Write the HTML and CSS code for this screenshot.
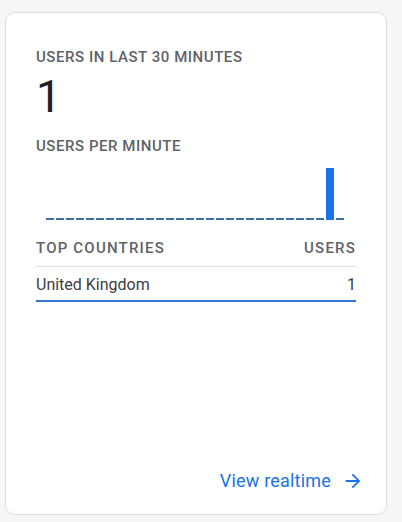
FILE: index.html
```html
<!DOCTYPE html>
<html>
<head>
<meta charset="utf-8">
<link rel="stylesheet" href="styles.css">
</head>
<body>
<div class="card">
  <div class="label first">USERS IN LAST 30 MINUTES</div>
  <div class="big">1</div>
  <div class="label">USERS PER MINUTE</div>
  <div class="chart" id="chart"></div>
  <div class="thead">
    <span>TOP COUNTRIES</span><span>USERS</span>
  </div>
  <div class="row">
    <span>United Kingdom</span><span>1</span>
  </div>
  <div class="footer">
    <a class="link">View realtime
      <svg width="22" height="22" viewBox="0 0 24 24"><path d="M12 4l-1.41 1.41L16.17 11H4v2h12.17l-5.58 5.59L12 20l8-8z" fill="#1a73e8"/></svg>
    </a>
  </div>
</div>
<script>
  var c = document.getElementById('chart');
  for (var i = 0; i < 30; i++) {
    var b = document.createElement('div');
    b.className = i === 28 ? 'bar on' : 'bar';
    c.appendChild(b);
  }
</script>
</body>
</html>
```
FILE: styles.css
```css
html, body { margin: 0; padding: 0; }
body {
  background: #f6f6f6;
  font-family: Roboto, "Liberation Sans", Arial, sans-serif;
  width: 402px;
  height: 522px;
  overflow: hidden;
}
.card {
  box-sizing: border-box;
  margin: 12px 0 0 5px;
  width: 382px;
  height: 503px;
  background: #fff;
  border: 1px solid #dadce0;
  border-radius: 10px;
  padding: 0 30px 0 30px;
  display: flex;
  flex-direction: column;
}
.label {
  font-size: 15px;
  font-weight: 500;
  letter-spacing: 0.55px;
  line-height: 18px;
  color: #5f6368;
}
.label.first { margin-top: 35px; }
.big {
  font-size: 45px;
  line-height: 48px;
  color: #202124;
  margin-top: 7px;
  margin-bottom: 16px;
}
.chart {
  margin: 13px 0 0 10px;
  height: 52px;
  display: flex;
  align-items: flex-end;
}
.bar {
  width: 8px;
  margin-right: 2px;
  height: 2px;
  background: #3c6fa3;
}
.bar.on {
  height: 52px;
  background: #1a73e8;
}
.thead {
  margin-top: 19px;
  display: flex;
  justify-content: space-between;
  font-size: 15px;
  font-weight: 500;
  letter-spacing: 1.2px;
  line-height: 18px;
  color: #5f6368;
  padding-bottom: 9px;
  border-bottom: 1px solid #dadce0;
}
.row {
  display: flex;
  justify-content: space-between;
  font-size: 16px;
  line-height: 20px;
  color: #3c4043;
  padding-top: 8px;
  padding-bottom: 5px;
  border-bottom: 2px solid #2f77d0;
}
.footer {
  margin-top: auto;
  margin-bottom: 22px;
  margin-right: -8px;
  display: flex;
  justify-content: flex-end;
}
.link {
  display: flex;
  align-items: center;
  gap: 11px;
  font-size: 18px;
  letter-spacing: 0.2px;
  line-height: 22px;
  color: #1a73e8;
}
.link svg { display: block; }
```
